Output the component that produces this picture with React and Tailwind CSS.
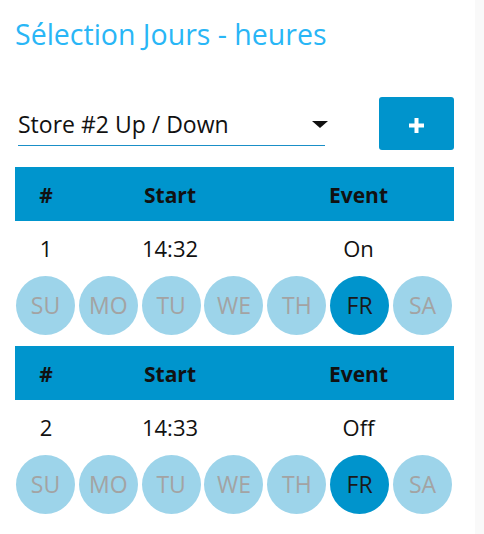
import React from "react";

const DAYS = ["SU", "MO", "TU", "WE", "TH", "FR", "SA"];

function Schedule({ n, time, event, active }) {
  return (
    <div>
      <div className="grid h-[54px] grid-cols-[62px_186px_1fr] items-center bg-[#0095cd] pt-[4px] text-[21px] font-bold text-[#111]">
        <div className="text-center">#</div>
        <div className="text-center">Start</div>
        <div className="text-center">Event</div>
      </div>
      <div className="grid h-[55px] grid-cols-[62px_186px_1fr] items-center text-[22px] text-[#111]">
        <div className="text-center">{n}</div>
        <div className="text-center">{time}</div>
        <div className="text-center">{event}</div>
      </div>
      <div className="ml-px flex w-[436px] justify-between">
        {DAYS.map((d) => (
          <div
            key={d}
            className={
              d === active
                ? "flex h-[59px] w-[59px] items-center justify-center rounded-full bg-[#0094cc] text-[23px] text-[#1a1a1a]"
                : "flex h-[59px] w-[59px] items-center justify-center rounded-full bg-[#9dd4ea] text-[23px] text-[#a3a3a3]"
            }
          >
            {d}
          </div>
        ))}
      </div>
    </div>
  );
}

export default function App() {
  return (
    <div className="flex h-[534px] w-[484px] bg-white font-['Open_Sans',sans-serif]">
      <div className="w-[475px] pl-[15px] pr-[21px]">
        <div className="mt-[17px] h-[34px] text-[28.5px] leading-[34px] text-[#29b6f6]">
          Sélection Jours - heures
        </div>
        <div className="mt-[46px] flex h-[53px] items-start justify-between">
          <div className="ml-[3px] mt-[12px] flex h-[37px] w-[307px] items-start border-b border-[#1a8fc7]">
            <div className="flex-1 text-[23px] leading-[30px] text-[#111]">Store #2 Up / Down</div>
            <svg width="16" height="7" viewBox="0 0 16 7" className="-mr-[3px] mt-[12px]">
              <polygon points="0,0 16,0 8,7" fill="#111" />
            </svg>
          </div>
          <button className="flex h-[53px] w-[75px] items-center justify-center rounded-[3px] bg-[#0094cc]">
            <svg width="15" height="15" viewBox="0 0 15 15" className="mt-[3px]">
              <rect x="5.5" y="0" width="4" height="15" fill="#fff" />
              <rect x="0" y="5.5" width="15" height="4" fill="#fff" />
            </svg>
          </button>
        </div>
        <div className="mt-[17px]">
          <Schedule n="1" time="14:32" event="On" active="FR" />
        </div>
        <div className="mt-[11px]">
          <Schedule n="2" time="14:33" event="Off" active="FR" />
        </div>
      </div>
      <div className="h-full flex-1 bg-[#f9f9f9]" />
    </div>
  );
}
